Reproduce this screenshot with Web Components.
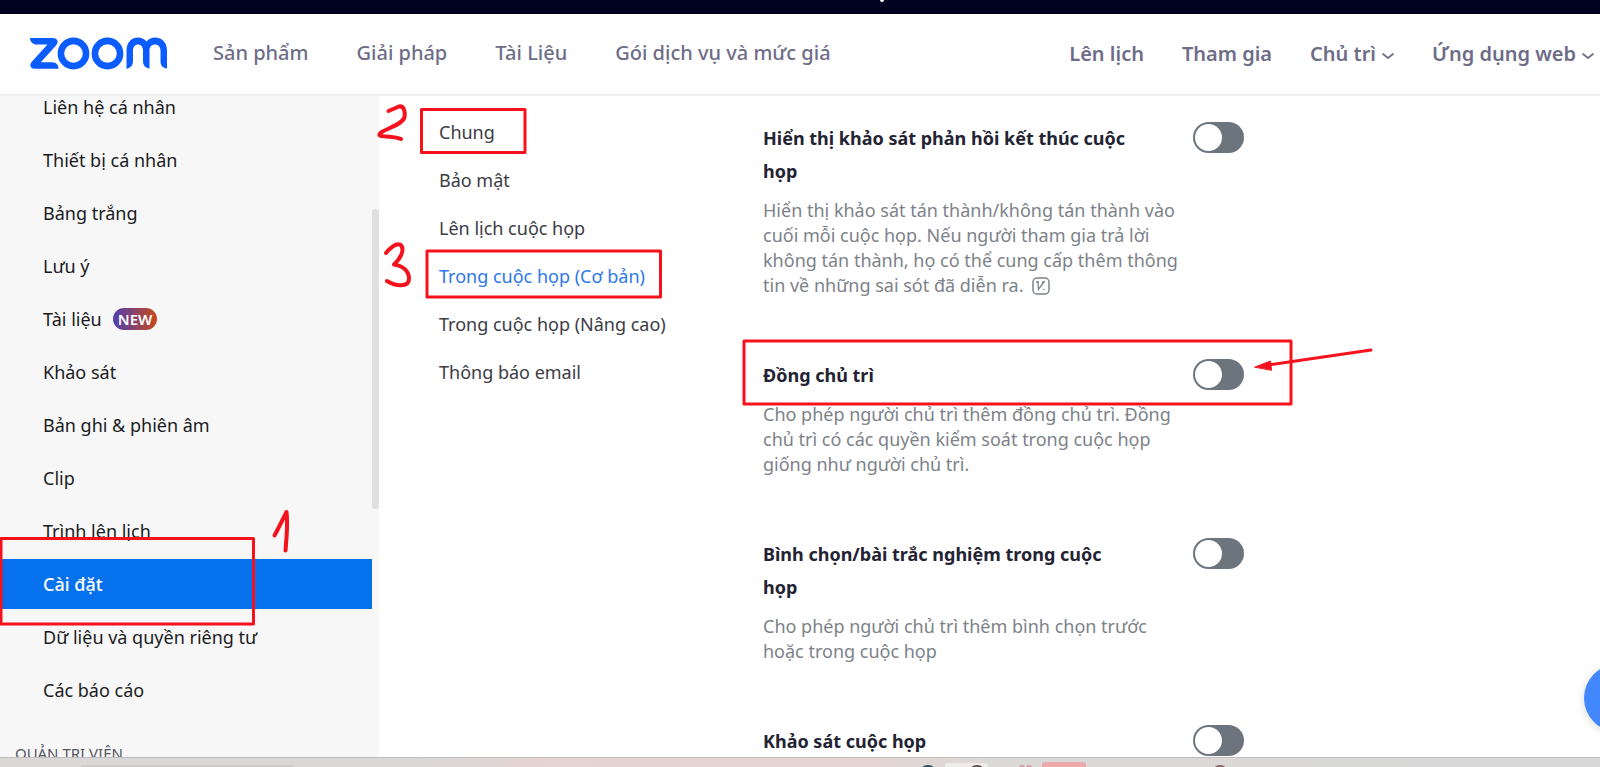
<!DOCTYPE html>
<html lang="vi">
<head>
<meta charset="utf-8">
<meta name="viewport" content="width=device-width, initial-scale=1">
<title>Cài đặt - Zoom</title>
<style>
  html, body { height: 100%; margin: 0; }
  body { font-family: "Noto Sans", "Open Sans", sans-serif; background: #fff; overflow: hidden; }
</style>
</head>
<body>
<zoom-page></zoom-page>
<script>
const define = (name, html, setup) => customElements.define(name, class extends HTMLElement {
  connectedCallback() {
    if (this.shadowRoot) return;
    const t = document.createElement('template');
    t.innerHTML = html;
    this.attachShadow({ mode: 'open' }).append(t.content.cloneNode(true));
    if (setup) setup(this, this.shadowRoot);
  }
});

define('zoom-logo', `
<style>
  :host { display: block; width: 138px; height: 34px; }
  a, svg { display: block; }
</style>
<a href="#" aria-label="Zoom">
<svg width="138" height="34" viewBox="0 0 138 34" fill="none" stroke="#0b5cff" stroke-width="6.6" stroke-linejoin="round">
  <path d="M0 1H22C28 1 29 5 26 8.500L10.800 25.200H22C26.500 25.200 28.500 28 28.500 31.800H5C0 31.800 -1 28 2 24.500L17.500 7.600H7.500C3 7.600 0 5 0 1Z" fill="#0b5cff" stroke="none"/>
  <circle cx="43.500" cy="16.500" r="12.600"/>
  <circle cx="77.500" cy="16.500" r="12.600"/>
  <path d="M96.500 32C100 31 103 29 103 24V13.500C103 5.500 113 5.500 113 13.500V24C113 29 116 31 119.500 31.500V13.500C119.500 5.500 130.500 5.500 130.500 13.500V24C130.500 29 133 31 137 31.500V13.500C137 0 122.500-3 116.500 4.500C110.500-3 96.500 0 96.500 13.500Z" fill="#0b5cff" stroke="none"/>
</svg></a>`);

define('nav-link', `
<style>
  :host { display: block; }
  a, button { display: flex; align-items: center; gap: 6px; margin: 0; padding: 0; border: 0; background: none;
    font: inherit; color: inherit; text-decoration: none; white-space: nowrap; line-height: 28px; cursor: pointer; }
  svg { margin-top: 4px; }
</style>`, (el, root) => {
  const menu = el.hasAttribute('menu');
  const node = document.createElement(menu ? 'button' : 'a');
  if (menu) node.type = 'button'; else node.href = '#';
  node.innerHTML = '<slot></slot>' + (menu ? '<svg width="12" height="8" viewBox="0 0 12 8" fill="none" stroke="currentColor" stroke-width="1.700" stroke-linecap="round" stroke-linejoin="round" aria-hidden="true"><path d="M1 2L6 6L11 2"/></svg>' : '');
  root.append(node);
});

define('site-header', `
<style>
  :host { display: flex; align-items: center; height: 82px; padding: 0 6px 0 30px; box-sizing: border-box;
    border-bottom: 2px solid #f0f0f1; background: #fff; color: #6e6d87; font-size: 20px; }
  nav { display: flex; }
  .main { gap: 48px; margin-left: 45px; padding-bottom: 2px; font-weight: 500; }
  .user { gap: 38px; margin-left: auto; font-weight: 600; }
</style>
<zoom-logo></zoom-logo>
<nav class="main" aria-label="Chính">
  <nav-link>Sản phẩm</nav-link><nav-link>Giải pháp</nav-link><nav-link>Tài Liệu</nav-link><nav-link>Gói dịch vụ và mức giá</nav-link>
</nav>
<nav class="user" aria-label="Tài khoản">
  <nav-link>Lên lịch</nav-link><nav-link>Tham gia</nav-link><nav-link menu>Chủ trì</nav-link><nav-link menu>Ứng dụng web</nav-link>
</nav>`);

define('side-item', `
<style>
  :host { display: block; height: 50px; }
  a { display: flex; align-items: center; gap: 11px; height: 100%; padding-left: 43px; color: #1b1c22;
    font-size: 18px; line-height: 26px; text-decoration: none; white-space: nowrap; }
  :host([active]) a { background: #0671ed; color: #fff; font-weight: 500; }
  .badge { padding: 0 5px; border-radius: 11px; background: linear-gradient(90deg, #4f3fb0, #8a4468 50%, #c94a1c);
    color: #fff; font-size: 15px; font-weight: 600; line-height: 22px; }
</style>
<a href="#"><slot></slot></a>`, (el, root) => {
  const badge = el.getAttribute('badge');
  if (!badge) return;
  const s = document.createElement('span');
  s.className = 'badge'; s.textContent = badge;
  root.querySelector('a').append(s);
});

define('side-bar', `
<style>
  :host { display: flex; flex: none; width: 379px; background: #f7f7f8; overflow: hidden; }
  nav { display: flex; flex-direction: column; flex: 1; gap: 3px; margin-top: -14px; }
  side-item { flex: none; }
  h2 { margin: 22px 0 0; padding-left: 15px; color: #55565e; font-size: 15px; font-weight: 400; line-height: 26px; }
  .track { width: 7px; padding-top: 113px; }
  .thumb { height: 300px; border-radius: 4px; background: #e0e0e1; }
</style>
<nav aria-label="Cá nhân">
  <side-item>Liên hệ cá nhân</side-item>
  <side-item>Thiết bị cá nhân</side-item>
  <side-item>Bảng trắng</side-item>
  <side-item>Lưu ý</side-item>
  <side-item badge="NEW">Tài liệu</side-item>
  <side-item>Khảo sát</side-item>
  <side-item>Bản ghi &amp; phiên âm</side-item>
  <side-item>Clip</side-item>
  <side-item>Trình lên lịch</side-item>
  <side-item active>Cài đặt</side-item>
  <side-item>Dữ liệu và quyền riêng tư</side-item>
  <side-item>Các báo cáo</side-item>
  <h2>QUẢN TRỊ VIÊN</h2>
</nav>
<div class="track"><div class="thumb"></div></div>`);

define('section-nav', `
<style>
  :host { display: block; flex: none; width: 324px; padding: 12px 0 0 60px; }
  a { display: block; color: #3c3c46; font-size: 18px; line-height: 48px; text-decoration: none; white-space: nowrap; }
  a.current { color: #2d78ec; }
</style>
<nav aria-label="Mục cài đặt">
  <a href="#">Chung</a>
  <a href="#">Bảo mật</a>
  <a href="#">Lên lịch cuộc họp</a>
  <a href="#" class="current" aria-current="page">Trong cuộc họp (Cơ bản)</a>
  <a href="#">Trong cuộc họp (Nâng cao)</a>
  <a href="#">Thông báo email</a>
</nav>`);

define('setting-row', `
<style>
  :host { display: grid; grid-template-columns: 370px 51px; column-gap: 60px; row-gap: 10px; }
  label { color: #232333; font-size: 18px; font-weight: 700; line-height: 33px; }
  p { grid-column: 1 / -1; width: 420px; margin: 0; color: #7d8289; font-size: 18px; line-height: 25px; }
  input { appearance: none; display: flex; align-items: center; width: 51px; height: 31px; margin: 0; padding: 2px;
    box-sizing: border-box; border-radius: 16px; background: #6c757e; cursor: pointer; }
  input::before { content: ""; width: 27px; height: 27px; border-radius: 50%; background: #fff; }
  input:checked { background: #0671ed; justify-content: flex-end; }
</style>
<label for="toggle"></label>
<input id="toggle" type="checkbox" role="switch">
<p><slot></slot></p>`, (el, root) => {
  root.querySelector('label').textContent = el.getAttribute('name');
});

define('version-mark', `
<style>:host { display: inline-block; margin-left: 4px; vertical-align: -3px; } svg { display: block; }</style>
<svg width="18" height="18" viewBox="0 0 18 18" fill="none" stroke="#7d8289" aria-hidden="true">
  <rect x="1" y="1" width="16" height="16" rx="4" stroke-width="1.500"/>
  <path d="M4 5H7M10 5H13M6 5L6.500 12.500L11.800 5" stroke-width="1.300"/>
  <circle cx="11.800" cy="12.500" r=".8" fill="#7d8289" stroke="none"/>
</svg>`);

define('settings-list', `
<style>
  :host { display: flex; flex-direction: column; flex: 1; gap: 61px; padding-top: 26px; }
</style>
<setting-row name="Hiển thị khảo sát phản hồi kết thúc cuộc họp">Hiển thị khảo sát tán thành/không tán thành vào cuối mỗi cuộc họp. Nếu người tham gia trả lời không tán thành, họ có thể cung cấp thêm thông tin về những sai sót đã diễn ra. <version-mark></version-mark></setting-row>
<setting-row name="Đồng chủ trì">Cho phép người chủ trì thêm đồng chủ trì. Đồng chủ trì có các quyền kiểm soát trong cuộc họp giống như người chủ trì.</setting-row>
<setting-row name="Bình chọn/bài trắc nghiệm trong cuộc họp">Cho phép người chủ trì thêm bình chọn trước hoặc trong cuộc họp</setting-row>
<setting-row name="Khảo sát cuộc họp"></setting-row>`);

define('desktop-dock', `
<style>
  :host { display: block; height: 10px; box-sizing: border-box; border-top: 1px solid #bebebe; overflow: hidden;
    background: linear-gradient(90deg, #d9d8d7 26%, #e6d3d3 34%, #e5d5d4 54%, #dbd9d8 62%, #d8d8d8); }
  svg { display: block; width: 100%; height: 10px; }
</style>
<svg viewBox="0 0 1600 10" preserveAspectRatio="xMidYMin slice" aria-hidden="true">
  <rect x="80" y="7" width="215" height="8" rx="4" fill="#cccbca"/>
  <circle cx="928" cy="16" r="9" fill="#244a55"/>
  <rect x="945" y="5" width="43" height="12" rx="3" fill="#efebea"/>
  <circle cx="977" cy="16" r="9" fill="#5b5052"/>
  <circle cx="1022" cy="10" r="3" fill="#d59bae"/><circle cx="1029" cy="10" r="3" fill="#d59bae"/>
  <rect x="1042" y="4" width="44" height="12" rx="3" fill="#eca8aa"/>
  <circle cx="1220" cy="15" r="8" fill="#8b5c62"/>
</svg>`);

define('help-bubble', `
<style>
  :host { position: absolute; right: -52px; bottom: 35px; }
  button { display: block; width: 68px; height: 68px; padding: 0; border: 0; border-radius: 50%; background: #4287fb;
    box-shadow: 0 2px 10px rgba(0, 0, 0, .15); cursor: pointer; }
</style>
<button type="button" aria-label="Trợ giúp"></button>`);

define('marker-layer', `
<style>
  :host { position: absolute; inset: 0; pointer-events: none; overflow: hidden; }
  svg { display: block; }
</style>
<svg width="1400" height="700" fill="none" stroke="#f5121d" stroke-width="3" stroke-linejoin="round" stroke-linecap="round" aria-hidden="true">
  <rect x="1" y="538.500" width="252.500" height="85.500"/>
  <rect x="421.500" y="109.500" width="103.500" height="43"/>
  <rect x="427" y="251" width="233.500" height="46"/>
  <rect x="744" y="341" width="547" height="63"/>
  <path d="M1371 350L1268 365"/>
  <path d="M1255 367L1270.500 361L1271.500 370Z" fill="#f5121d" stroke-width="1"/>
  <path stroke-width="4" d="M274.500 535.500C278 529 283 519 286.500 512C287.500 520 287 530 286.500 538C286 542 286 546 285.500 550.500"/>
  <path stroke-width="4" d="M388.500 111L399 106.500C404 105.500 405.500 112 404.500 117C403 124 390 127 381 132.500C377 136 381 136 386 136.500C392 137 397 137 401 139"/>
  <path stroke-width="4" d="M386 253C390 248 396 243 400 244.500C405 248 402 257 394 264.500C403 266 409 271 409 279C409 287 397 287 387 281"/>
</svg>`);

define('zoom-page', `
<style>
  :host { position: relative; display: flex; flex-direction: column; height: 100vh; overflow: hidden; }
  .strip { display: flex; flex: none; justify-content: center; height: 14px; background: #00001f; }
  .strip i { width: 4px; height: 2px; margin-left: 164px; border-radius: 0 0 2px 2px; background: #fff; }
  main { display: flex; flex: 1; min-height: 0; overflow: hidden; }
  site-header, desktop-dock { flex: none; }
</style>
<div class="strip"><i></i></div>
<site-header></site-header>
<main><side-bar></side-bar><section-nav></section-nav><settings-list></settings-list></main>
<desktop-dock></desktop-dock>
<help-bubble></help-bubble>
<marker-layer></marker-layer>`);
</script>
</body>
</html>
